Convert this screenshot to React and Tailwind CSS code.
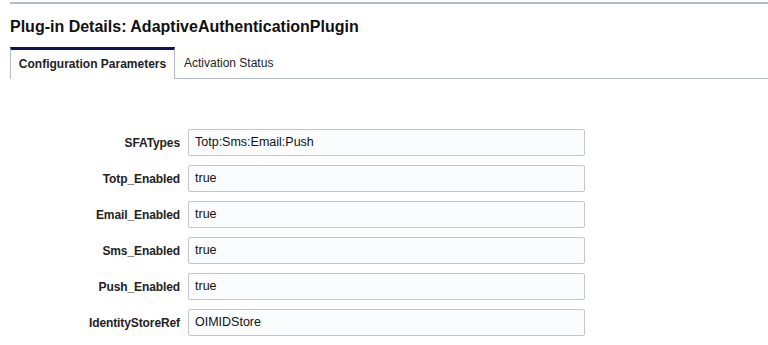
export default function App() {
  const rows = [
    ["SFATypes", "Totp:Sms:Email:Push"],
    ["Totp_Enabled", "true"],
    ["Email_Enabled", "true"],
    ["Sms_Enabled", "true"],
    ["Push_Enabled", "true"],
    ["IdentityStoreRef", "OIMIDStore"],
  ];
  return (
    <div className="w-[768px] h-[345px] bg-white overflow-hidden text-[#1a1a1a]" style={{ fontFamily: '"Liberation Sans", Arial, sans-serif' }}>
      <div className="pt-[2px] pl-[10px]">
        <div className="h-[2px] bg-[#b4bcc3]" />
        <h1 className="mt-[13px] text-[16px] leading-[19px] font-bold text-[#111]">Plug-in Details: AdaptiveAuthenticationPlugin</h1>
        <div className="mt-[11px] flex items-stretch">
          <div className="w-[165px] h-[32px] border-t-[3px] border-t-[#0d1457] border-l border-r border-[#b4bcc3] flex items-center justify-center text-[12px] font-bold text-[#222] pb-[1px]">
            Configuration Parameters
          </div>
          <div className="flex-1 border-b border-[#b4bcc3] flex items-center pl-[9px] text-[12px] text-[#222] pt-[1px]">
            Activation Status
          </div>
        </div>
      </div>
      <div className="mt-[50px] flex flex-col gap-[9px]">
        {rows.map(([label, value]) => (
          <div key={label} className="flex items-center">
            <div className="w-[180px] text-right text-[12px] font-bold text-[#222] tracking-[-0.1px]">{label}</div>
            <div className="ml-[8px] w-[397px] h-[27px] border border-[#c6c6c6] rounded-[2px] bg-[#fbfcfd] flex items-center pl-[6px] text-[12.5px] text-[#111]">
              {value}
            </div>
          </div>
        ))}
      </div>
    </div>
  );
}
